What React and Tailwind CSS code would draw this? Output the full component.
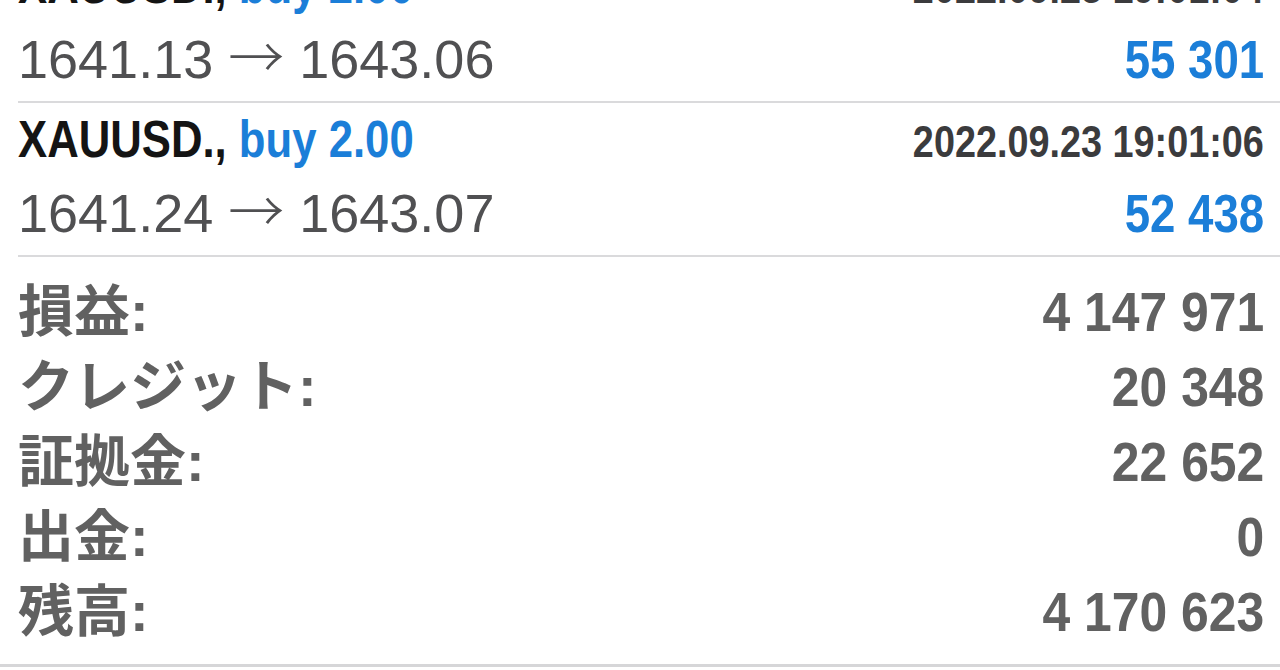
const positions = [
  { symbol: "XAUUSD.,", side: "buy 2.00", time: "2022.09.23 19:01:04", open: "1641.13", close: "1643.06", profit: "55 301" },
  { symbol: "XAUUSD.,", side: "buy 2.00", time: "2022.09.23 19:01:06", open: "1641.24", close: "1643.07", profit: "52 438" },
];

const summary = [
  { label: "損益:", value: "4 147 971" },
  { label: "クレジット:", value: "20 348" },
  { label: "証拠金:", value: "22 652" },
  { label: "出金:", value: "0" },
  { label: "残高:", value: "4 170 623" },
];

function PositionRow({ item }) {
  return (
    <div className="ml-[18px] h-[154px] border-b-2 border-[#dadadc] pr-[16px]">
      <div className="flex h-[72px] items-baseline justify-between leading-[72px]">
        <span className="inline-block origin-left scale-x-[0.84] whitespace-nowrap text-[52px] font-bold text-[#141414]">
          {item.symbol} <span className="text-[#1b7ed8]">{item.side}</span>
        </span>
        <span className="inline-block origin-right scale-x-[0.84] whitespace-nowrap text-[45px] font-bold text-[#3b3b3d]">
          {item.time}
        </span>
      </div>
      <div className="flex h-[76px] items-baseline justify-between leading-[76px]">
        <span className="whitespace-nowrap text-[54px] text-[#505052]">
          {item.open}{" "}
          <span className="font-['Noto_Sans_CJK_JP',sans-serif] text-[56px] leading-none font-light">→</span>{" "}
          {item.close}
        </span>
        <span className="inline-block origin-right scale-x-[0.86] whitespace-nowrap text-[53px] font-bold text-[#1b7ed8]">
          {item.profit}
        </span>
      </div>
    </div>
  );
}

export default function App() {
  return (
    <div
      className="h-[670px] w-[1280px] overflow-hidden bg-white"
      style={{ fontFamily: '"Liberation Sans", "Noto Sans CJK JP", sans-serif' }}
    >
      <div className="-mt-[51px]">
        {positions.map((item, i) => (
          <PositionRow key={i} item={item} />
        ))}
      </div>
      <div className="border-b-[3px] border-[#d6d6d8] pb-[15px] pl-[18px] pr-[16px] pt-[17px]">
        {summary.map((row) => (
          <div key={row.label} className="flex h-[75px] items-baseline justify-between leading-[75px] text-[#616161]">
            <span className="whitespace-nowrap text-[56px] font-bold">{row.label}</span>
            <span className="inline-block origin-right scale-x-[0.89] whitespace-nowrap text-[56px] font-bold">
              {row.value}
            </span>
          </div>
        ))}
      </div>
    </div>
  );
}
